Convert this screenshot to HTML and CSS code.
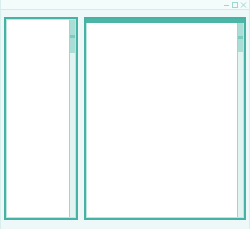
FILE: index.html
```html
<!DOCTYPE html>
<html>
<head>
<meta charset="utf-8">
<link rel="stylesheet" href="styles.css">
</head>
<body>
<div class="window">
  <div class="titlebar">
    <div class="controls">
      <svg width="24" height="8" viewBox="0 0 24 8">
        <line x1="1" y1="4.5" x2="6" y2="4.5" stroke="#9fd6cf" stroke-width="1"/>
        <rect x="9.5" y="1.5" width="5" height="5" fill="none" stroke="#9fd6cf" stroke-width="1"/>
        <path d="M18 1.5 L23 6.5 M23 1.5 L18 6.5" stroke="#9fd6cf" stroke-width="1"/>
      </svg>
    </div>
  </div>
  <div class="content">
    <div class="panel left">
      <div class="body"></div>
      <div class="scroll">
        <div class="thumb"><span class="grip"></span></div>
      </div>
    </div>
    <div class="panel right">
      <div class="header"></div>
      <div class="main">
        <div class="body"></div>
        <div class="scroll">
          <div class="thumb"><span class="grip"></span></div>
        </div>
      </div>
    </div>
  </div>
</div>
</body>
</html>
```
FILE: styles.css
```css
html, body { margin: 0; padding: 0; }
body { width: 250px; height: 229px; background: #eef8f8; overflow: hidden; }
.window {
  width: 250px; height: 229px; box-sizing: border-box;
  border-left: 1px solid #d8efee; border-right: 1px solid #d8efee;
  display: flex; flex-direction: column;
}
.titlebar {
  height: 9px; border-bottom: 1px solid #d2ecea; background: #f3fbfb;
  display: flex; justify-content: flex-end; align-items: center; padding-right: 2px;
}
.controls { display: flex; }
.content {
  flex: 1; display: flex; gap: 6px; padding: 7px 3px 9px 3px;
}
.panel {
  box-sizing: border-box; border: 2px solid #45b2a3; background: #ffffff;
  box-shadow: inset 0 0 0 1px #bfe5df;
  display: flex;
}
.left { width: 74px; padding: 1px; }
.right { flex: 1; flex-direction: column; padding: 0 1px 1px 1px; }
.body { flex: 1; background: #fff; }
.header { height: 4px; background: #4bb5a6; margin: 0 -1px; }
.main { flex: 1; display: flex; }
.scroll {
  width: 5px; background: #e2f4f1; display: flex; flex-direction: column;
  border-left: 1px solid #9fd7ce;
}
.thumb {
  height: 33px; background: #a9ddd5; display: flex; align-items: center; justify-content: center;
}
.right .thumb { height: 29px; }
.grip { width: 5px; height: 3px; background: #7ccbbf; }
```
